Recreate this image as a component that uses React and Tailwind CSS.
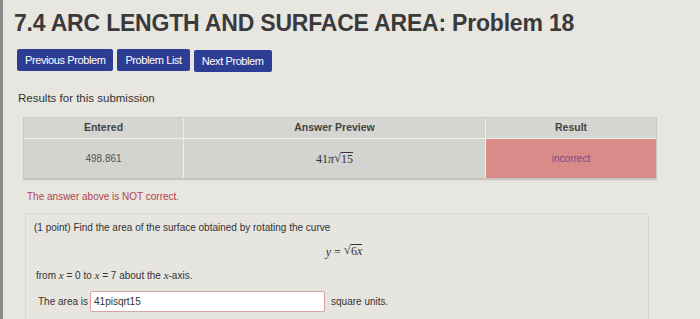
import React from 'react';

function App() {
  return (
    <div className="w-[700px] h-[319px] overflow-hidden bg-[#e8e6e1] border-l-[3px] border-[#8a8a88] text-[#333]" style={{ fontFamily: '"Liberation Sans", Arial, sans-serif' }}>
      <h1 className="pl-[11px] pt-[8px] text-[23px] font-bold leading-[30px] text-[#3a3a3a] tracking-[-0.2px]">
        7.4 ARC LENGTH AND SURFACE AREA: Problem 18
      </h1>
      <div className="flex gap-[4px] pl-[14px] mt-[11px]">
        <button className="h-[22px] px-[8px] rounded-[2px] bg-[#2e3d94] text-white text-[11px] tracking-[-0.4px]">Previous Problem</button>
        <button className="h-[22px] px-[8px] rounded-[2px] bg-[#2e3d94] text-white text-[11px] tracking-[-0.4px]">Problem List</button>
        <button className="h-[22px] px-[8px] rounded-[2px] bg-[#2e3d94] text-white text-[11px] tracking-[-0.4px] mt-[1px]">Next Problem</button>
      </div>
      <p className="pl-[15px] mt-[18px] text-[11.5px] text-[#333]">Results for this submission</p>
      <div className="ml-[20px] mt-[10px] w-[634px] border border-[#c9c8c4] shadow-[0_1px_1px_rgba(0,0,0,0.15)]">
        <div className="grid grid-cols-[160px_302px_1fr] bg-[#d5d5d2] h-[21px] text-[10.5px] font-bold text-[#444] border-b border-[#eeeeec]">
          <div className="flex items-center justify-center border-r border-[#eeeeec]">Entered</div>
          <div className="flex items-center justify-center border-r border-[#eeeeec]">Answer Preview</div>
          <div className="flex items-center justify-center">Result</div>
        </div>
        <div className="grid grid-cols-[160px_302px_1fr] bg-[#d3d3cf] h-[39px] text-[10px] text-[#555]">
          <div className="flex items-center justify-center border-r border-[#eeeeec]">498.861</div>
          <div className="flex items-center justify-center border-r border-[#eeeeec] text-[12px] text-[#333]" style={{ fontFamily: '"Liberation Serif", serif' }}>
            41<i>π</i>
            <span className="flex items-start">
              <span className="text-[13px] leading-none">√</span>
              <span className="border-t border-[#333] leading-[13px] mt-[1px]">15</span>
            </span>
          </div>
          <div className="flex items-center justify-center bg-[#d88b89] text-[#7b4a8a]">incorrect</div>
        </div>
      </div>
      <p className="pl-[24px] mt-[10px] text-[10px] text-[#b3444c]">The answer above is NOT correct.</p>
      <div className="ml-[22px] mt-[9px] w-[624px] h-[120px] bg-[#e6e5e0] border border-[#d6d5d0] rounded-[2px] px-[8px] pt-[6px] text-[10px] text-[#333]">
        <p>(1 point) Find the area of the surface obtained by rotating the curve</p>
        <div className="flex justify-center mt-[8px] pl-[14px] text-[12px]" style={{ fontFamily: '"Liberation Serif", serif' }}>
          <i>y</i>
          <span className="mx-[3px]">=</span>
          <span className="flex items-start">
            <span className="text-[13px] leading-none">√</span>
            <span className="border-t border-[#333] leading-[13px] mt-[1px]">6<i>x</i></span>
          </span>
        </div>
        <p className="mt-[6px] pl-[2px]">
          from <i style={{ fontFamily: '"Liberation Serif", serif' }} className="text-[11px]">x</i> = 0 to <i style={{ fontFamily: '"Liberation Serif", serif' }} className="text-[11px]">x</i> = 7 about the <i style={{ fontFamily: '"Liberation Serif", serif' }} className="text-[11px]">x</i>-axis.
        </p>
        <div className="flex items-center mt-[7px] pl-[4px]">
          <span>The area is</span>
          <div className="ml-[2px] w-[235px] h-[21px] bg-white border border-[#d9a3a3] rounded-[2px] flex items-center px-[3px] text-[#333]">41pisqrt15</div>
          <span className="ml-[6px]">square units.</span>
        </div>
      </div>
    </div>
  );
}

export default App;
